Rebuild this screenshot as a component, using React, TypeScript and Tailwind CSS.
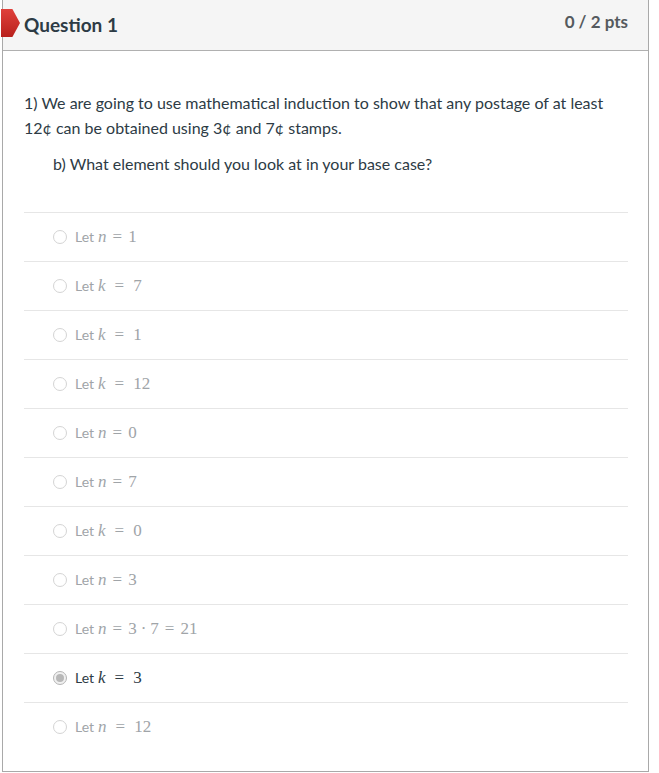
import React from "react";

type Part = { t: string; v?: boolean; sp?: boolean };

// math pieces: v = italic variable, sp = wide spaced operator
const answers: { math: Part[]; wide?: boolean; selected?: boolean }[] = [
  { math: [{ t: "n", v: true }, { t: "=" }, { t: "1" }] },
  { math: [{ t: "k", v: true }, { t: "=" }, { t: "7" }], wide: true },
  { math: [{ t: "k", v: true }, { t: "=" }, { t: "1" }], wide: true },
  { math: [{ t: "k", v: true }, { t: "=" }, { t: "12" }], wide: true },
  { math: [{ t: "n", v: true }, { t: "=" }, { t: "0" }] },
  { math: [{ t: "n", v: true }, { t: "=" }, { t: "7" }] },
  { math: [{ t: "k", v: true }, { t: "=" }, { t: "0" }], wide: true },
  { math: [{ t: "n", v: true }, { t: "=" }, { t: "3" }] },
  {
    math: [
      { t: "n", v: true },
      { t: "=" },
      { t: "3" },
      { t: "·", sp: true },
      { t: "7" },
      { t: "=" },
      { t: "21" },
    ],
  },
  { math: [{ t: "k", v: true }, { t: "=" }, { t: "3" }], wide: true, selected: true },
  { math: [{ t: "n", v: true }, { t: "=" }, { t: "12" }], wide: true },
];

const Math = ({ parts, wide }: { parts: Part[]; wide?: boolean }) => (
  <span className="ml-[4px] inline-flex items-baseline font-['Liberation_Serif',serif] text-[17px]">
    {parts.map((p, i) => {
      if (p.v) return <i key={i}>{p.t}</i>;
      if (p.t === "=")
        return (
          <span key={i} className={wide ? "px-[9px]" : "px-[6px]"}>
            =
          </span>
        );
      if (p.sp)
        return (
          <span key={i} className="px-[4px]">
            {p.t}
          </span>
        );
      return <span key={i}>{p.t}</span>;
    })}
  </span>
);

const Radio = ({ checked }: { checked?: boolean }) => (
  <span
    className={
      "flex h-[14px] w-[14px] shrink-0 items-center justify-center rounded-full border " +
      (checked ? "border-[#b5b5b5] bg-[#f0f0f0]" : "border-[#d4d4d4] bg-white")
    }
  >
    {checked && <span className="h-[8px] w-[8px] rounded-full bg-[#b8b8b8]" />}
  </span>
);

export default function App() {
  return (
    <div className="bg-white pl-[2px] pr-[10px] font-['Lato','Noto_Sans',sans-serif]">
      <div className="relative border-x border-b border-[#a9a9a9]">
        {/* header */}
        <div className="flex h-[51px] justify-between border-b border-[#b0b0b0] bg-[#f5f5f5] pl-[21px] pr-[20px]">
          <h2 className="pt-[11px] text-[19px] font-bold text-[#2d3b45]">Question 1</h2>
          <div className="pt-[9px] text-[17px] font-bold text-[#555a5e]">0 / 2 pts</div>
        </div>
        <div
          className="absolute left-[-2px] top-[9px] h-[28px] w-[19px] bg-gradient-to-b from-[#e0403b] to-[#b8201c]"
          style={{ clipPath: "polygon(0 0, 60% 0, 100% 50%, 60% 100%, 0 100%)" }}
        />

        {/* body */}
        <div className="pl-[21px] pr-[20px] pt-[39px] pb-[20px] text-[#2d3b45]">
          <p className="text-[16px] leading-[25px]">
            1) We are going to use mathematical induction to show that any postage of at least 12¢ can
            be obtained using 3¢ and 7¢ stamps.
          </p>
          <p className="mt-[11px] pl-[29px] text-[16px] leading-[25px]">
            b) What element should you look at in your base case?
          </p>

          <div className="mt-[36px]">
            {answers.map((a, i) => (
              <div
                key={i}
                className="flex h-[49px] items-center border-t border-[#e6e6e6] pl-[29px]"
              >
                <Radio checked={a.selected} />
                <span
                  className={
                    "ml-[8px] flex items-baseline text-[14px] " +
                    (a.selected ? "text-[#2d3b45]" : "text-[#a0a4a8]")
                  }
                >
                  Let
                  <Math parts={a.math} wide={a.wide} />
                </span>
              </div>
            ))}
          </div>
        </div>
      </div>
    </div>
  );
}
